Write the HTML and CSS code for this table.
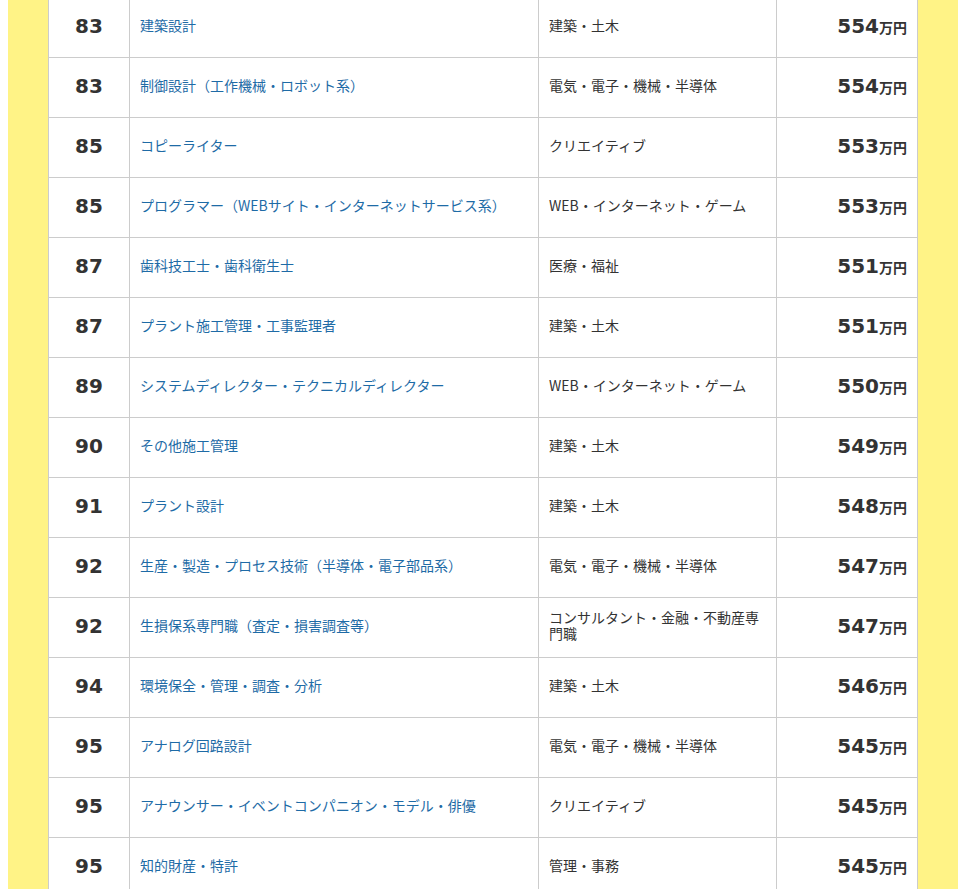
FILE: index.html
```html
<!DOCTYPE html>
<html lang="ja">
<head>
<meta charset="utf-8">
<link rel="stylesheet" href="styles.css">
</head>
<body>
<div class="panel">
<table class="ranking">
<colgroup><col class="c-rank"><col class="c-job"><col class="c-cat"><col class="c-pay"></colgroup>
<tbody>
<tr><td class="rank">83</td><td class="job"><a href="#">建築設計</a></td><td class="cat">建築・土木</td><td class="pay"><b>554</b><span>万円</span></td></tr>
<tr><td class="rank">83</td><td class="job"><a href="#">制御設計（工作機械・ロボット系）</a></td><td class="cat">電気・電子・機械・半導体</td><td class="pay"><b>554</b><span>万円</span></td></tr>
<tr><td class="rank">85</td><td class="job"><a href="#">コピーライター</a></td><td class="cat">クリエイティブ</td><td class="pay"><b>553</b><span>万円</span></td></tr>
<tr><td class="rank">85</td><td class="job"><a href="#">プログラマー（WEBサイト・インターネットサービス系）</a></td><td class="cat">WEB・インターネット・ゲーム</td><td class="pay"><b>553</b><span>万円</span></td></tr>
<tr><td class="rank">87</td><td class="job"><a href="#">歯科技工士・歯科衛生士</a></td><td class="cat">医療・福祉</td><td class="pay"><b>551</b><span>万円</span></td></tr>
<tr><td class="rank">87</td><td class="job"><a href="#">プラント施工管理・工事監理者</a></td><td class="cat">建築・土木</td><td class="pay"><b>551</b><span>万円</span></td></tr>
<tr><td class="rank">89</td><td class="job"><a href="#">システムディレクター・テクニカルディレクター</a></td><td class="cat">WEB・インターネット・ゲーム</td><td class="pay"><b>550</b><span>万円</span></td></tr>
<tr><td class="rank">90</td><td class="job"><a href="#">その他施工管理</a></td><td class="cat">建築・土木</td><td class="pay"><b>549</b><span>万円</span></td></tr>
<tr><td class="rank">91</td><td class="job"><a href="#">プラント設計</a></td><td class="cat">建築・土木</td><td class="pay"><b>548</b><span>万円</span></td></tr>
<tr><td class="rank">92</td><td class="job"><a href="#">生産・製造・プロセス技術（半導体・電子部品系）</a></td><td class="cat">電気・電子・機械・半導体</td><td class="pay"><b>547</b><span>万円</span></td></tr>
<tr><td class="rank">92</td><td class="job"><a href="#">生損保系専門職（査定・損害調査等）</a></td><td class="cat">コンサルタント・金融・不動産専門職</td><td class="pay"><b>547</b><span>万円</span></td></tr>
<tr><td class="rank">94</td><td class="job"><a href="#">環境保全・管理・調査・分析</a></td><td class="cat">建築・土木</td><td class="pay"><b>546</b><span>万円</span></td></tr>
<tr><td class="rank">95</td><td class="job"><a href="#">アナログ回路設計</a></td><td class="cat">電気・電子・機械・半導体</td><td class="pay"><b>545</b><span>万円</span></td></tr>
<tr><td class="rank">95</td><td class="job"><a href="#">アナウンサー・イベントコンパニオン・モデル・俳優</a></td><td class="cat">クリエイティブ</td><td class="pay"><b>545</b><span>万円</span></td></tr>
<tr><td class="rank">95</td><td class="job"><a href="#">知的財産・特許</a></td><td class="cat">管理・事務</td><td class="pay"><b>545</b><span>万円</span></td></tr>
</tbody>
</table>
</div>
</body>
</html>
```
FILE: styles.css
```css
html, body {
  background: #ffffff;
}
body {
  margin: 0 8px;
  font-family: "Noto Sans CJK JP", sans-serif;
  color: #333333;
}
.panel {
  width: 950px;
  background: #fff386;
  padding: 0 40px 40px;
  box-sizing: border-box;
  overflow: hidden;
}
.ranking {
  width: 869px;
  margin-top: -3px;
  border-collapse: collapse;
  table-layout: fixed;
  background: #ffffff;
}
.c-rank { width: 81px; }
.c-job { width: 409px; }
.c-cat { width: 238px; }
.c-pay { width: 141px; }
.ranking td {
  border: 1px solid #cccccc;
  height: 60px;
  padding: 0 10px 6px;
  box-sizing: border-box;
  vertical-align: middle;
  font-size: 14px;
  line-height: 16px;
}
.rank {
  text-align: center;
  font-family: "DejaVu Sans", sans-serif;
  font-weight: bold;
  font-size: 20px !important;
  color: #333333;
  padding: 0 0 4px !important;
}
.job a {
  color: #1e6ba6;
  text-decoration: none;
}
.cat {
  color: #333333;
}
.pay {
  text-align: right;
  white-space: nowrap;
  padding-bottom: 2px !important;
}
.pay b {
  font-family: "DejaVu Sans", sans-serif;
  font-weight: bold;
  font-size: 20px;
  color: #333333;
}
.pay span {
  font-size: 14px;
  font-weight: bold;
  color: #333333;
}
```
